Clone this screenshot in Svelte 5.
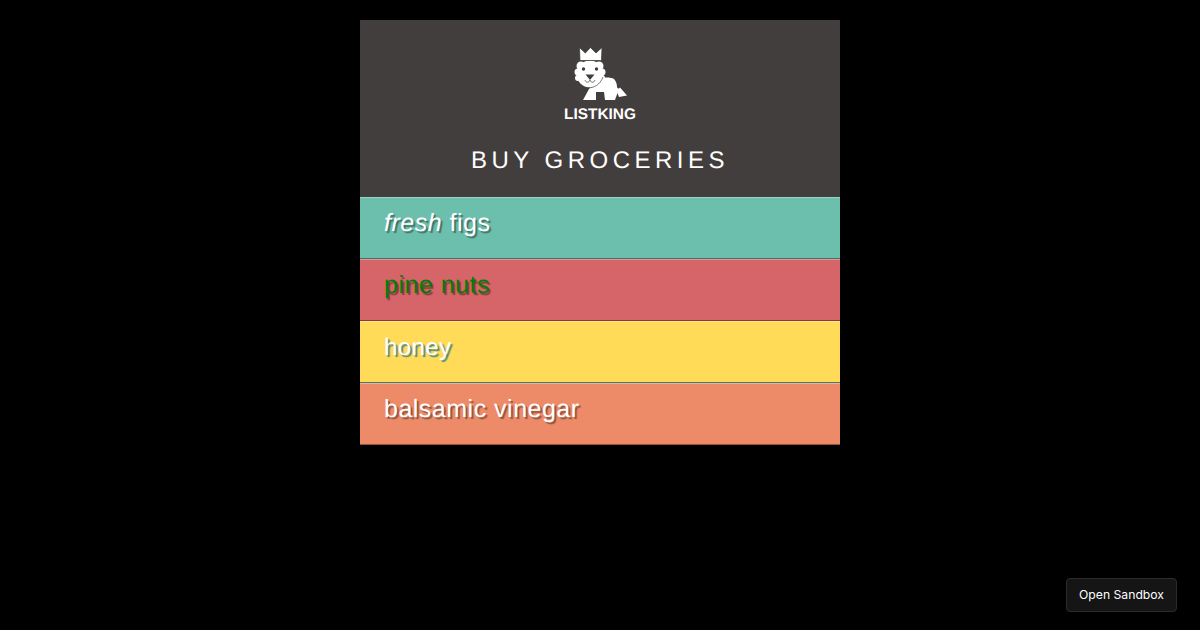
<script>
  const items = [
    { cls: 'teal', italic: 'fresh', text: ' figs' },
    { cls: 'red', italic: '', text: 'pine nuts' },
    { cls: 'yellow', italic: '', text: 'honey' },
    { cls: 'orange', italic: '', text: 'balsamic vinegar' }
  ];
</script>

<main class="page">
  <section class="card">
    <header class="head">
      <svg class="logo" viewBox="0 0 54 54" width="54" height="54" aria-hidden="true">
        <path fill="#fff" d="M24 32 C30 30 38 30 41 32 C43 34 44 37 44 40 C45 42 46 42 47 40.500 L54 48.500 L46 50 L44.500 46 L42 53 L32 53 L31 45 L23 45 L23 53 L10 53 L16 42 Z" />
        <g fill="#fff">
          <circle cx="17" cy="27" r="13.500" />
          <circle cx="8" cy="19" r="4.500" />
          <circle cx="26" cy="19" r="4.500" />
          <circle cx="5" cy="25" r="3.500" />
          <circle cx="29" cy="25" r="3.500" />
          <circle cx="5" cy="31" r="3" />
          <circle cx="29" cy="31" r="3" />
        </g>
        <path fill="#fff" stroke="#423e3d" stroke-width="0.800" d="M6.500 0.500 L12.300 6 L17.500 0.500 L23 6 L29 0.500 L28.500 13.500 L7 13.500 Z" />
        <circle cx="10.500" cy="22" r="1.700" fill="#423e3d" />
        <circle cx="23.500" cy="22" r="1.700" fill="#423e3d" />
        <path fill="#423e3d" d="M12.500 27.500 L21.500 27.500 L17 33 Z" />
        <path fill="none" stroke="#423e3d" stroke-width="0.700" d="M12 33 C13 36 16 36 17 33 C18 36 21 36 22 33 M14 41 C21 41 27 38 30 30" />
      </svg>
      <div class="brand">LISTKING</div>
      <h1>BUY GROCERIES</h1>
    </header>
    <ul>
      {#each items as item}
        <li class={item.cls}>{#if item.italic}<em>{item.italic}</em>{/if}{item.text}</li>
      {/each}
    </ul>
  </section>
  <button class="sandbox">Open Sandbox</button>
</main>

<style>
  :global(body) { margin: 0; background: #000; }
  .page { height: 630px; padding-top: 20px; box-sizing: border-box; display: flex; justify-content: center; align-items: flex-start; font-family: "Liberation Sans", Arial, sans-serif; text-rendering: geometricPrecision; }
  .card { width: 480px; }
  .head { height: 177px; box-sizing: border-box; background: #423e3d; color: #fff; text-align: center; padding-top: 27px; }
  .logo { display: block; margin: 0 auto; }
  .brand { font-weight: 700; font-size: 15.400px; line-height: 17px; margin-top: 5px; }
  h1 { margin: 24px 0 0; font-size: 24px; font-weight: 400; line-height: 28px; letter-spacing: 4.500px; }
  ul { margin: 0; padding: 0; list-style: none; }
  li { height: 62px; box-sizing: border-box; padding: 11px 24px 0; font-size: 25px; line-height: 28px; letter-spacing: .5px; color: #fff; text-shadow: 2px 2px 1px rgba(0,0,0,.4); border-top: 1px solid rgba(255,255,255,.3); border-bottom: 1px solid rgba(0,0,0,.4); }
  .teal { background: #6cbfac; }
  .red { background: #d6656a; color: #008000; }
  .yellow { background: #ffdb58; font-size: 24px; line-height: 30px; letter-spacing: .4px; text-shadow: 2px 2px 1px #4d8a80; border-bottom-color: #3f7d72; }
  .orange { background: #ed8b68; }
  .sandbox { position: fixed; right: 23px; bottom: 18px; width: 111px; height: 34px; padding: 0 0 2px; border: 1px solid #2c2c2c; border-radius: 4px; background: #151515; color: #fff; font: 400 12.200px Inter, sans-serif; }
</style>
